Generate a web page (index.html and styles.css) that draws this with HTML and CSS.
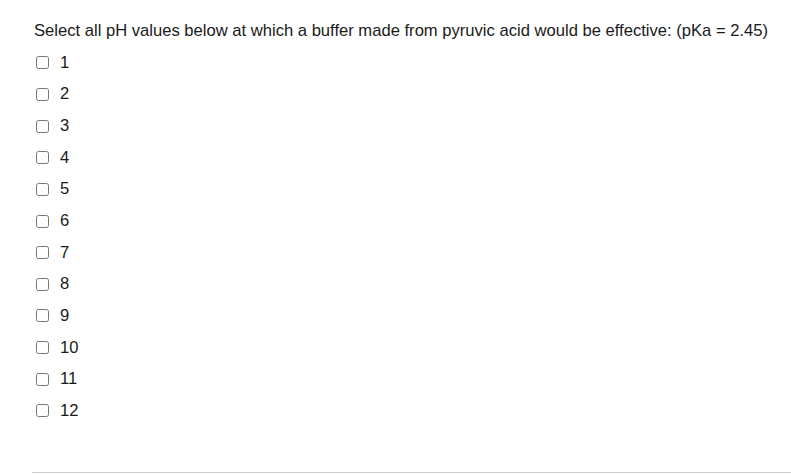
FILE: index.html
```html
<!DOCTYPE html>
<html>
<head>
<meta charset="utf-8">
<link rel="stylesheet" href="styles.css">
</head>
<body>
<div class="question">
  <p class="prompt">Select all pH values below at which a buffer made from pyruvic acid would be effective: (pKa = 2.45)</p>
  <ul class="options">
    <li class="option"><input type="checkbox" class="box"><span class="lbl">1</span></li>
    <li class="option"><input type="checkbox" class="box"><span class="lbl">2</span></li>
    <li class="option"><input type="checkbox" class="box"><span class="lbl">3</span></li>
    <li class="option"><input type="checkbox" class="box"><span class="lbl">4</span></li>
    <li class="option"><input type="checkbox" class="box"><span class="lbl">5</span></li>
    <li class="option"><input type="checkbox" class="box"><span class="lbl">6</span></li>
    <li class="option"><input type="checkbox" class="box"><span class="lbl">7</span></li>
    <li class="option"><input type="checkbox" class="box"><span class="lbl">8</span></li>
    <li class="option"><input type="checkbox" class="box"><span class="lbl">9</span></li>
    <li class="option"><input type="checkbox" class="box"><span class="lbl">10</span></li>
    <li class="option"><input type="checkbox" class="box"><span class="lbl">11</span></li>
    <li class="option"><input type="checkbox" class="box"><span class="lbl">12</span></li>
  </ul>
</div>
<div class="rule"></div>
</body>
</html>
```

FILE: styles.css
```css
html, body {
  margin: 0;
  padding: 0;
  background: #fff;
}
body {
  font-family: "Liberation Sans", Arial, sans-serif;
  font-size: 16.6px;
  color: #1a1a1a;
  width: 791px;
  height: 474px;
  overflow: hidden;
}
.question {
  padding: 22px 0 0 34px;
}
.prompt {
  margin: 0;
  line-height: 18px;
  height: 18px;
  white-space: nowrap;
}
.options {
  list-style: none;
  margin: 0;
  padding: 7px 0 0 0;
}
.option {
  display: flex;
  align-items: center;
  height: 31.65px;
}
.box {
  width: 13px;
  height: 13px;
  margin: 0 11px 0 2px;
  padding: 0;
}
.lbl {
  line-height: 18px;
}
.rule {
  margin-left: 32px;
  height: 1px;
  background: #d0d0d0;
  margin-top: 45px;
}
```
